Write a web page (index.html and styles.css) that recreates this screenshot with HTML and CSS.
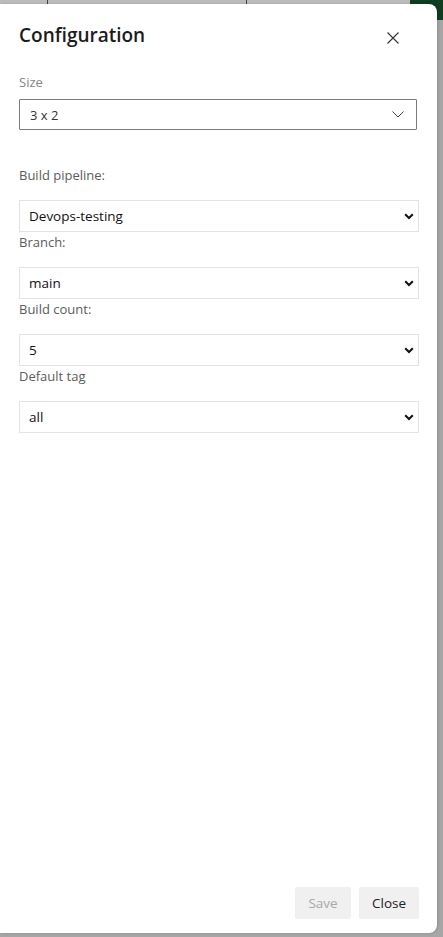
FILE: index.html
```html
<!DOCTYPE html>
<html lang="en">
<head>
<meta charset="utf-8">
<title>Configuration</title>
<link rel="stylesheet" href="styles.css">
</head>
<body>
<div class="backdrop">
  <span class="bd-line bd-line-1"></span>
  <span class="bd-line bd-line-2"></span>
  <span class="bd-green"></span>
</div>
<div class="panel">
  <div class="header">
    <h1 class="title">Configuration</h1>
    <button class="close-x" aria-label="Close">
      <svg width="12" height="12" viewBox="0 0 12 12"><path d="M0.5 0.5 L11.5 11.5 M11.5 0.5 L0.5 11.5" stroke="#333" stroke-width="1.1" fill="none"/></svg>
    </button>
  </div>

  <div class="label label-size">Size</div>
  <div class="dropdown">
    <span>3 x 2</span>
    <svg width="12" height="7" viewBox="0 0 12 7"><path d="M0.5 0.5 L6 6 L11.5 0.5" stroke="#444" stroke-width="1" fill="none"/></svg>
  </div>

  <div class="fields">
    <div class="label">Build pipeline:</div>
    <div class="select"><span>Devops-testing</span><svg class="chev" width="10" height="7" viewBox="0 0 10 7"><path d="M1.2 1.2 L5 5 L8.8 1.2" stroke="#111" stroke-width="2" fill="none"/></svg></div>
    <div class="label">Branch:</div>
    <div class="select"><span>main</span><svg class="chev" width="10" height="7" viewBox="0 0 10 7"><path d="M1.2 1.2 L5 5 L8.8 1.2" stroke="#111" stroke-width="2" fill="none"/></svg></div>
    <div class="label">Build count:</div>
    <div class="select"><span>5</span><svg class="chev" width="10" height="7" viewBox="0 0 10 7"><path d="M1.2 1.2 L5 5 L8.8 1.2" stroke="#111" stroke-width="2" fill="none"/></svg></div>
    <div class="label">Default tag</div>
    <div class="select"><span>all</span><svg class="chev" width="10" height="7" viewBox="0 0 10 7"><path d="M1.2 1.2 L5 5 L8.8 1.2" stroke="#111" stroke-width="2" fill="none"/></svg></div>
  </div>

  <div class="footer">
    <button class="btn btn-disabled">Save</button>
    <button class="btn">Close</button>
  </div>
</div>
</body>
</html>
```
FILE: styles.css
```css
* { box-sizing: border-box; }
html, body { margin: 0; padding: 0; }
body {
  width: 443px;
  height: 937px;
  background: #a6a6a6;
  font-family: "Open Sans", "Noto Sans", sans-serif;
  overflow: hidden;
  position: relative;
}
.backdrop {
  position: absolute;
  top: 0; left: 0;
  width: 443px;
  height: 20px;
  background: #bcbcbc;
}
.bd-line { position: absolute; top: 0; width: 1px; height: 6px; background: #444; }
.bd-line-1 { left: 47px; }
.bd-line-2 { left: 246px; }
.bd-green { position: absolute; top: 0; left: 410px; width: 33px; height: 20px; background: #0e3d22; }
.panel {
  position: relative;
  margin-top: 4px;
  width: 437px;
  height: 929px;
  background: #fff;
  border-radius: 0 8px 8px 0;
  display: flex;
  flex-direction: column;
  padding: 17px 18px 14px 19px;
  box-shadow: 1px 0 3px rgba(0,0,0,0.15);
}
.header {
  display: flex;
  justify-content: space-between;
  align-items: center;
  height: 28px;
}
.title {
  margin: 0;
  font-size: 19px;
  font-weight: 600;
  line-height: 28px;
  color: #1b1b1b;
}
.close-x {
  border: 0;
  background: none;
  padding: 0;
  margin-right: 20px;
  margin-top: 5px;
  width: 12px;
  height: 12px;
  display: flex;
}
.label {
  font-size: 13px;
  line-height: 20px;
  color: #5c5c5c;
}
.label-size {
  margin-top: 23px;
  color: #858585;
}
.dropdown {
  margin-top: 7px;
  width: 398px;
  height: 31px;
  border: 1px solid #7a7a7a;
  border-radius: 1px;
  display: flex;
  align-items: center;
  justify-content: space-between;
  padding: 0 12px 0 10px;
  font-size: 13px;
  color: #333;
}
.fields {
  margin-top: 35px;
  display: flex;
  flex-direction: column;
}
.fields .label { margin-bottom: 15px; }
.select {
  width: 400px;
  height: 32px;
  border: 1px solid #e3e3e3;
  display: flex;
  align-items: center;
  justify-content: space-between;
  padding: 0 4px 0 9px;
  font-size: 13.5px;
  color: #111;
}
.footer {
  margin-top: auto;
  display: flex;
  justify-content: flex-end;
  gap: 8px;
}
.btn {
  height: 32px;
  border: 0;
  border-radius: 2px;
  background: #f0f0f0;
  font-family: inherit;
  font-size: 13.5px;
  color: #222;
  padding: 0 12px;
}
.btn-disabled { color: #a8a8a8; width: 56px; }
.btn:not(.btn-disabled) { width: 60px; }
```
